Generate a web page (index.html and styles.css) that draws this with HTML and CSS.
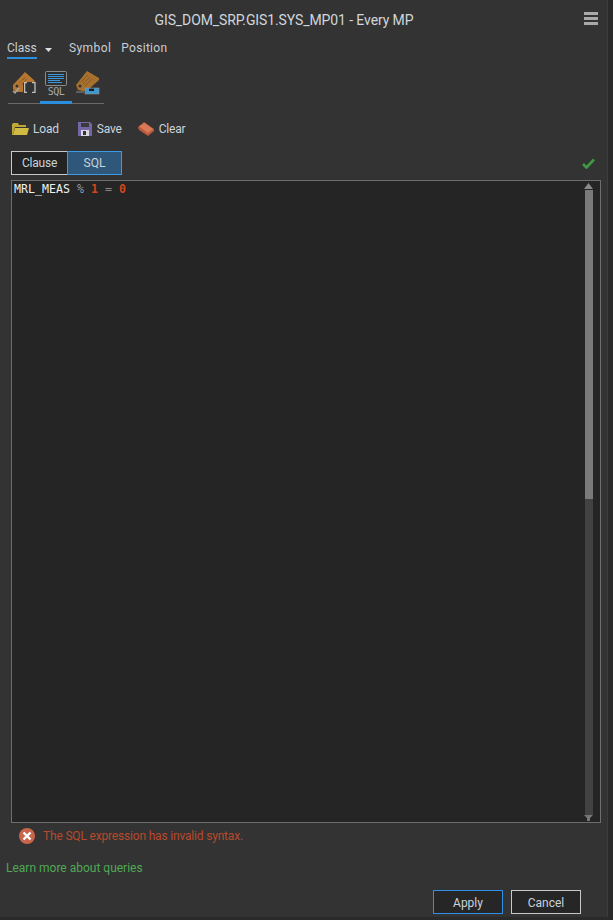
FILE: index.html
```html
<!DOCTYPE html>
<html lang="en">
<head>
<meta charset="utf-8">
<title>GIS_DOM_SRP.GIS1.SYS_MP01 - Every MP</title>
<link rel="stylesheet" href="styles.css">
</head>
<body>
<div class="pane">
  <header class="title-bar">
    <h1 class="title">GIS_DOM_SRP.GIS1.SYS_MP01 - Every MP</h1>
    <svg class="menu-icon" width="14" height="13" viewBox="0 0 14 13"><path fill="#a9a9a9" d="M0 0h14v3H0zM0 5h14v3H0zM0 10h14v3H0z"/></svg>
  </header>
  <nav class="tabs">
    <span class="tab tab-active">Class</span>
    <svg class="tab-caret" width="7" height="4" viewBox="0 0 7 4"><path fill="#ddd" d="M0 0h7L3.5 4z"/></svg>
    <span class="tab tab-symbol">Symbol</span>
    <span class="tab tab-position">Position</span>
  </nav>
  <div class="icon-tabs">
    <div class="icon-tab">
      <svg width="24" height="24" viewBox="0 0 24 24">
        <path fill="#b5772f" d="M1 14 13 1l10 9-1 1H11v10H3l-2-3z"/>
        <path stroke="#8a5a26" stroke-width="0.800" fill="none" d="M7 12l5-5M9 14l6-6M11 9l3-3"/>
        <circle cx="5" cy="15" r="1.500" fill="#333"/>
        <path stroke="#c0c0c0" stroke-width="1.300" fill="none" d="M15 11.700h-2.400v9.600H15M20 11.700h3v9.600h-3"/>
        <path stroke="#a8a8a8" stroke-width="1.400" fill="none" d="M1 20l2 2 4-5"/>
      </svg>
    </div>
    <div class="icon-tab icon-tab-active">
      <svg class="sql-sheet" width="22" height="15" viewBox="0 0 22 15">
        <rect x="0.500" y="0.500" width="21" height="14" rx="1" fill="#2f2f2f" stroke="#8c8c8c"/>
        <path stroke="#3a97dc" d="M3 3.500h16M3 5.500h16M3 7.500h16M3 9.500h12M3 11.500h14"/>
      </svg>
      <span class="sql-label">SQL</span>
    </div>
    <div class="icon-tab">
      <svg width="26" height="24" viewBox="0 0 26 24">
        <path fill="#a8702e" d="M1 14 12 0l12 7v2l-9 8h-5v3H8l-5-1z"/>
        <path stroke="#7f5424" stroke-width="0.800" fill="none" d="M6 11l7-7M8 13l7-7M10 15l7-7"/>
        <circle cx="5" cy="15" r="1.500" fill="#333"/>
        <path stroke="#8a8a8a" d="M1 21h8"/>
        <rect x="10" y="17" width="14" height="6" fill="#3f97d0"/>
        <path fill="#1c1c1c" d="M14 17.500h5v2.500h-5z"/>
        <rect x="10" y="17" width="14" height="6" fill="none" stroke="#8f8f8f" stroke-width="0.600"/>
      </svg>
    </div>
  </div>
  <div class="toolbar">
    <button class="tool tool-load">
      <svg width="17" height="12" viewBox="0 0 17 12"><path fill="#bfa736" d="M0 1.500 1 0h5l1 2h7v2H3L1 12H0z"/><path fill="#d2bb42" d="M3 5h14l-2 7H1z"/></svg>
      <span>Load</span>
    </button>
    <button class="tool tool-save">
      <svg width="14" height="14" viewBox="0 0 14 14"><path fill="#7766a6" d="M0 0h12l2 2v12H0z"/><path fill="#3a3a3a" d="M3 1h8v4H3z"/><path fill="#d8d8e0" d="M3 8h8v6H3z"/><path fill="#333" d="M5 9h3v4H5z"/></svg>
      <span>Save</span>
    </button>
    <button class="tool tool-clear">
      <svg width="16" height="14" viewBox="0 0 16 14"><path fill="#b95a3c" d="M0 5 6 0l10 7v2l-6 5-9-6z"/><path fill="#d87a58" d="M1 4.500 6.500 1 15 7l-5 4z"/></svg>
      <span>Clear</span>
    </button>
  </div>
  <div class="mode-row">
    <div class="segments">
      <span class="segment segment-off">Clause</span>
      <span class="segment segment-on">SQL</span>
    </div>
    <svg class="check" width="13" height="11" viewBox="0 0 13 11"><path fill="none" stroke="#3f9a44" stroke-width="2.600" d="M1 6l3.500 3.500L12 1.500"/></svg>
  </div>
  <div class="editor">
    <code class="code"><span class="c-field">MRL_MEAS</span> <span class="c-op">%</span> <span class="c-num">1</span> <span class="c-eq">=</span> <span class="c-num">0</span></code>
    <div class="scrollbar">
      <svg width="9" height="7" viewBox="0 0 9 7"><path fill="#8a8a8a" d="M4.500 0 9 6H0z"/></svg>
      <div class="thumb"></div>
      <svg width="9" height="7" viewBox="0 0 9 7"><path fill="#777" d="M0 0h9L6 3v3H3V3z"/></svg>
    </div>
  </div>
  <div class="error">
    <svg width="16" height="16" viewBox="0 0 16 16"><circle cx="8" cy="8" r="8" fill="#c9654a"/><path stroke="#fff" stroke-width="2.400" d="M4.500 4.500l7 7M11.500 4.500l-7 7"/></svg>
    <span>The SQL expression has invalid syntax.</span>
  </div>
  <a class="learn" href="#">Learn more about queries</a>
  <div class="actions">
    <button class="btn btn-primary">Apply</button>
    <button class="btn">Cancel</button>
  </div>
</div>
</body>
</html>
```
FILE: styles.css
```css
html, body {
  margin: 0;
  padding: 0;
  height: 100%;
  background: #2a2a2a;
}
body {
  overflow: hidden;
  font-family: Roboto, "Open Sans", sans-serif;
  font-size: 12px;
  color: #c9d3dc;
}
.pane {
  box-sizing: border-box;
  width: 608px;
  height: 917px;
  background: #333333;
  border-right: 1px solid #3d3d3d;
  display: flex;
  flex-direction: column;
  overflow: hidden;
}
.title-bar {
  height: 40px;
  display: flex;
  align-items: center;
  justify-content: center;
  position: relative;
  flex: none;
}
.title {
  margin: 0;
  font-size: 14px;
  font-weight: 400;
  letter-spacing: -0.100px;
  color: #d0d6dc;
  width: 100%;
  text-align: center;
  padding-right: 39px;
  box-sizing: border-box;
}
.menu-icon {
  position: absolute;
  left: 584px;
  top: 12px;
}
.tabs {
  height: 20px;
  flex: none;
  display: flex;
  align-items: flex-start;
  padding-left: 7px;
  line-height: 16px;
}
.tab {
  color: #c9ced3;
  height: 18px;
}
.tab-active {
  width: 30px;
  border-bottom: 2px solid #2b8fe0;
  box-sizing: border-box;
  height: 19px;
}
.tab-caret {
  margin: 8px 0 0 8px;
}
.tab-symbol {
  margin-left: 17px;
  letter-spacing: 0.400px;
}
.tab-position {
  margin-left: 10px;
  letter-spacing: 0.300px;
}
.icon-tabs {
  flex: none;
  width: 96px;
  height: 44px;
  margin-left: 8px;
  box-sizing: border-box;
  border-bottom: 1px solid #6a6a6a;
  display: flex;
  align-items: flex-start;
}
.icon-tab {
  width: 32px;
  height: 44px;
  box-sizing: border-box;
  display: flex;
  flex-direction: column;
  align-items: center;
  padding-top: 11px;
}
.icon-tab-active {
  border-bottom: 3px solid #2b8fe0;
}
.sql-label {
  font-family: "DejaVu Sans Mono", monospace;
  font-size: 10px;
  letter-spacing: -0.500px;
  line-height: 11px;
  color: #a8a8a8;
}
.toolbar {
  flex: none;
  display: flex;
  align-items: center;
  height: 28px;
  margin-top: 11px;
  padding-left: 12px;
}
.tool {
  background: none;
  border: 0;
  padding: 0;
  display: flex;
  align-items: center;
  gap: 5px;
  font: inherit;
  letter-spacing: -0.200px;
  color: #c9d3dc;
}
.tool-load {
  gap: 4px;
}
.tool-save {
  margin-left: 19px;
}
.tool-clear {
  margin-left: 16px;
}
.mode-row {
  flex: none;
  display: flex;
  align-items: center;
  justify-content: space-between;
  margin-top: 8px;
  padding: 0 12px 0 11px;
  height: 24px;
}
.segments {
  display: flex;
  height: 24px;
}
.segment {
  box-sizing: border-box;
  height: 24px;
  display: flex;
  align-items: center;
  justify-content: center;
}
.segment-off {
  width: 56px;
  background: #232323;
  border: 1px solid #c8c8c8;
  border-right: 0;
  letter-spacing: -0.200px;
}
.segment-on {
  width: 55px;
  background: #2f5779;
  border: 1px solid #3c9ae6;
}
.editor {
  flex: none;
  box-sizing: border-box;
  width: 590px;
  height: 643px;
  margin: 5px 0 0 11px;
  background: #252525;
  border: 1px solid #6e6e6e;
  display: flex;
  justify-content: space-between;
  position: relative;
}
.code {
  font-family: "DejaVu Sans Mono", "Liberation Mono", monospace;
  font-size: 11.620px;
  line-height: 16px;
  padding: 0 0 0 2px;
  white-space: pre;
}
.c-field { color: #f0f0f0; }
.c-op { color: #8f9aa6; }
.c-num { color: #d0471a; font-weight: 700; }
.c-eq { color: #8a8a8a; }
.scrollbar {
  flex: none;
  width: 9px;
  margin-right: 7px;
  display: flex;
  flex-direction: column;
  align-items: center;
  background: none;
  padding-top: 2px;
}
.thumb {
  width: 8px;
  flex: 1;
  background: linear-gradient(#7a7a7a 0, #7a7a7a 49.500%, #424242 49.500%);
}
.error {
  flex: none;
  display: flex;
  align-items: center;
  gap: 8px;
  margin: 5px 0 0 19px;
  height: 16px;
  letter-spacing: -0.180px;
  color: #b8492c;
}
.learn {
  flex: none;
  margin: 16px 0 0 6px;
  color: #4fa954;
  text-decoration: none;
  line-height: 16px;
}
.actions {
  flex: none;
  display: flex;
  gap: 8px;
  margin: 14px 0 0 433px;
}
.btn {
  box-sizing: border-box;
  width: 70px;
  height: 24px;
  background: #262626;
  border: 1px solid #c8c8c8;
  color: #c9d3dc;
  font: inherit;
  padding: 1px 0 0;
}
.btn-primary {
  border-color: #2f8fe6;
}
```
